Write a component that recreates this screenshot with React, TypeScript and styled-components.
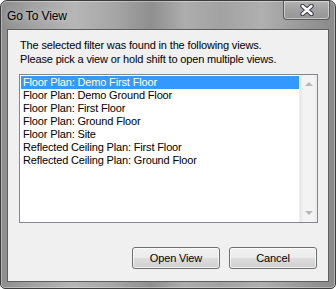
import React from "react";
import styled, { createGlobalStyle } from "styled-components";

const GlobalStyle = createGlobalStyle`
  html, body {
    margin: 0;
    padding: 0;
    background: #ffffff;
  }
  body {
    font-family: "Liberation Sans", Arial, sans-serif;
  }
`;

const Window = styled.div`
  width: 336px;
  height: 289px;
  box-sizing: border-box;
  border: 1px solid #3c3c3c;
  border-radius: 7px 7px 5px 5px;
  background: linear-gradient(
    90deg,
    #8d8d8d 0%,
    #a3a3a3 10%,
    #b6b6b6 22%,
    #a6a6a6 34%,
    #8f8f8f 45%,
    #adadad 55%,
    #a2a2a2 66%,
    #b0b0b0 78%,
    #999999 90%,
    #8a8a8a 100%
  );
  box-shadow: inset 0 0 0 1px rgba(255, 255, 255, 0.35);
  display: flex;
  flex-direction: column;
  padding: 0 6px 6px 6px;
  overflow: hidden;
`;

const TitleBar = styled.div`
  height: 28px;
  display: flex;
  align-items: flex-start;
  justify-content: space-between;
`;

const Title = styled.span`
  font-size: 12px;
  letter-spacing: -0.1px;
  color: #000;
  margin: 8px 0 0 0;
  text-shadow: 0 0 6px rgba(255, 255, 255, 0.7);
`;

const CloseButton = styled.div`
  width: 45px;
  height: 18px;
  margin-right: -1px;
  border: 1px solid #5a5a5a;
  border-top: none;
  border-radius: 0 0 4px 4px;
  box-shadow: inset 0 0 0 1px rgba(255, 255, 255, 0.45);
  background: linear-gradient(180deg, #b4b4b4 0%, #a0a0a0 50%, #969696 100%);
  display: flex;
  align-items: center;
  justify-content: center;
`;

const Client = styled.div`
  flex: 1;
  border: 1px solid #5e5e5e;
  background: #f0f0f0;
  display: flex;
  flex-direction: column;
  padding: 8px 10px 12px 11px;
`;

const Message = styled.p`
  margin: 0 0 8px 1px;
  font-size: 11px;
  letter-spacing: -0.15px;
  line-height: 14px;
  color: #000;
`;

const ListBox = styled.div`
  height: 147px;
  border: 1px solid #828790;
  background: #ffffff;
  display: flex;
`;

const Items = styled.div`
  flex: 1;
  padding: 1px 0 0 1px;
  display: flex;
  flex-direction: column;
`;

const Item = styled.div<{ $selected?: boolean }>`
  height: 13px;
  line-height: 13px;
  font-size: 11px;
  letter-spacing: -0.15px;
  padding-left: 2px;
  white-space: nowrap;
  color: ${(p) => (p.$selected ? "#ffffff" : "#000000")};
  background: ${(p) => (p.$selected ? "#3399ff" : "transparent")};
`;

const ScrollBar = styled.div`
  width: 17px;
  background: linear-gradient(90deg, #e6e6e6 0%, #f3f3f3 20%, #f3f3f3 80%, #eaeaea 100%);
  border-left: 1px solid #ececec;
  display: flex;
  flex-direction: column;
  justify-content: space-between;
  align-items: center;
  padding: 7px 0;
`;

const Arrow = styled.div<{ $down?: boolean }>`
  width: 0;
  height: 0;
  border-left: 4px solid transparent;
  border-right: 4px solid transparent;
  ${(p) =>
    p.$down
      ? "border-top: 4px solid #b8b8b8;"
      : "border-bottom: 4px solid #b8b8b8;"}
`;

const ButtonRow = styled.div`
  margin-top: auto;
  display: flex;
  justify-content: flex-end;
  gap: 9px;
  padding-right: 1px;
`;

const Button = styled.button`
  width: 88px;
  height: 22px;
  border: 1px solid #707070;
  border-radius: 3px;
  background: linear-gradient(180deg, #f2f2f2 0%, #ebebeb 48%, #dddddd 52%, #cfcfcf 100%);
  box-shadow: inset 0 0 0 1px rgba(255, 255, 255, 0.7);
  font-family: "Liberation Sans", Arial, sans-serif;
  font-size: 11px;
  letter-spacing: -0.15px;
  color: #000;
  padding: 0;
`;

const views = [
  "Floor Plan: Demo First Floor",
  "Floor Plan: Demo Ground Floor",
  "Floor Plan: First Floor",
  "Floor Plan: Ground Floor",
  "Floor Plan: Site",
  "Reflected Ceiling Plan: First Floor",
  "Reflected Ceiling Plan: Ground Floor",
];

const CloseIcon = () => (
  <svg width="14" height="12" viewBox="0 0 14 12">
    <path d="M2.5 2 L11.5 10 M11.5 2 L2.5 10" stroke="#3a3a4a" strokeWidth="4.4" strokeLinecap="round" />
    <path d="M2.5 2 L11.5 10 M11.5 2 L2.5 10" stroke="#ffffff" strokeWidth="2.4" strokeLinecap="round" />
  </svg>
);

export default function App() {
  return (
    <>
      <GlobalStyle />
      <Window>
        <TitleBar>
          <Title>Go To View</Title>
          <CloseButton>
            <CloseIcon />
          </CloseButton>
        </TitleBar>
        <Client>
          <Message>
            The selected filter was found in the following views.
            <br />
            Please pick a view or hold shift to open multiple views.
          </Message>
          <ListBox>
            <Items>
              {views.map((v, i) => (
                <Item key={v} $selected={i === 0}>
                  {v}
                </Item>
              ))}
            </Items>
            <ScrollBar>
              <Arrow />
              <Arrow $down />
            </ScrollBar>
          </ListBox>
          <ButtonRow>
            <Button>Open View</Button>
            <Button>Cancel</Button>
          </ButtonRow>
        </Client>
      </Window>
    </>
  );
}
